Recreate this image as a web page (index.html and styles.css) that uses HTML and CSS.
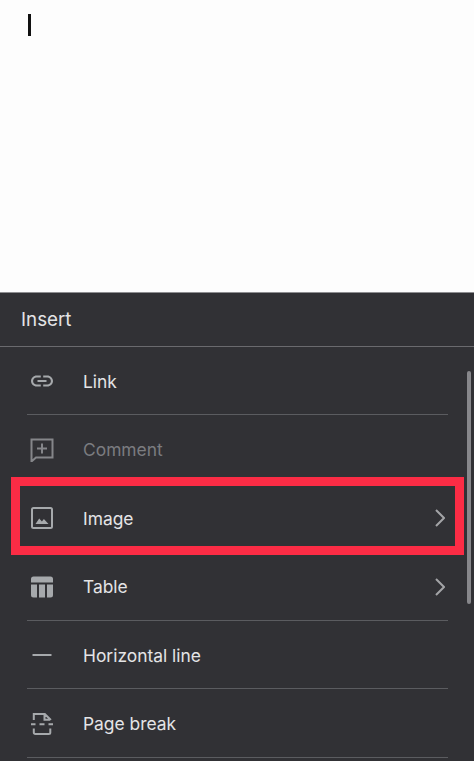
FILE: index.html
```html
<!DOCTYPE html>
<html lang="en">
<head>
  <meta charset="UTF-8">
  <meta name="viewport" content="width=device-width, initial-scale=1.0">
  <title>Insert</title>
  <link rel="stylesheet" href="styles.css">
</head>
<body>
  <div class="editor"><span class="cursor"></span></div>

  <section class="sheet">
    <h2 class="sheet-title">Insert</h2>
    <ul class="menu">
      <li class="row">
        <svg class="icon" viewBox="0 0 24 24"><path d="M3.100 12c0-2 1.600-3.600 3.600-3.600h4.100V6.500H6.700C3.600 6.500 1 9 1 12s2.600 5.500 5.700 5.500h4.100v-1.900H6.700c-2 0-3.600-1.600-3.600-3.600zM7.500 13h9v-2h-9v2zm9.800-6.500h-4.100v1.900h4.100c2 0 3.600 1.600 3.600 3.600s-1.600 3.600-3.600 3.600h-4.100v1.900h4.100c3.100 0 5.700-2.500 5.700-5.500s-2.600-5.500-5.700-5.500z"/></svg>
        <span>Link</span>
      </li>
      <li class="row disabled">
        <svg class="icon" viewBox="0 0 24 24"><path class="line" d="M1.500 1.500h21v18H6L1.500 23.500zM12 5.500v10M7 10.500h10"/></svg>
        <span>Comment</span>
      </li>
      <li class="row">
        <svg class="icon" viewBox="0 0 24 24"><rect class="line" x="2" y="2" width="20" height="20" rx="1.500"/><path d="M5.500 18l3.700-5.500 2.700 3 2-2.500 4.600 5z"/></svg>
        <span>Image</span>
        <svg class="chevron" viewBox="0 0 10 18"><path d="M1 1l8 8-8 8"/></svg>
      </li>
      <li class="row">
        <svg class="icon" viewBox="0 0 24 24"><path d="M3.500 1.500h17a2.500 2.500 0 0 1 2.500 2.500v3.500H1V4a2.500 2.500 0 0 1 2.500-2.500zM1 9.500h6V22.500H3.500A2.500 2.500 0 0 1 1 20zM9 9.500h6v13H9zM17 9.500h6V20a2.500 2.500 0 0 1-2.500 2.500H17z"/></svg>
        <span>Table</span>
        <svg class="chevron" viewBox="0 0 10 18"><path d="M1 1l8 8-8 8"/></svg>
      </li>
      <li class="row">
        <svg class="icon" viewBox="0 0 24 24"><path d="M2.500 11h19v2h-19z"/></svg>
        <span>Horizontal line</span>
      </li>
      <li class="row">
        <svg class="icon" viewBox="0 0 24 24"><path class="line" d="M3.800 8V2h11l5.500 5.500V8M14.500 2v5.800h5.800M3.800 16.500v4a1.500 1.500 0 0 0 1.500 1.500h13.500a1.500 1.500 0 0 0 1.500-1.500v-4M1 12.200h4.500M9.500 12.200h5M18.500 12.200H23"/></svg>
        <span>Page break</span>
      </li>
    </ul>
    <div class="scrollbar"></div>
    <div class="highlight"></div>
  </section>
</body>
</html>
```

FILE: styles.css
```css
* { margin:0; padding:0; box-sizing:border-box; }
html, body { height:100%; }
body { display:flex; flex-direction:column; height:761px; overflow:hidden; background:#fdfdfd; font-family:Inter, "Liberation Sans", sans-serif; color:#e4e4e6; }

/* Editor area */
.editor { height:291.500px; padding:14px 0 0 28px; }
.cursor { display:block; width:3px; height:22px; background:#111; }

/* Bottom sheet */
.sheet { position:relative; flex:1; overflow:hidden; background:#313135; border-top:1px solid #8e8e91; }
.sheet-title { height:54.500px; padding:0 21px; display:flex; align-items:center; font-size:18.800px; font-weight:400; border-bottom:1px solid #6a6a6e; }
.menu { list-style:none; }
.row {
  display:flex; align-items:center; gap:29.500px; height:68.450px;
  margin:0 26px 0 27px; padding:1.500px 3px 0 2.500px;
  font-size:17.400px; border-bottom:1px solid #5b5c60;
}
.row.disabled { color:#7b7c80; }
.icon { width:24px; height:24px; flex:none; fill:#a6a9ac; }
.icon .line { fill:none; stroke:#a6a9ac; stroke-width:2; }
.row.disabled .icon { fill:#85868a; }
.row.disabled .icon .line { stroke:#85868a; }
.chevron { width:10px; height:18px; margin-left:auto; fill:none; stroke:#a3a4a7; stroke-width:2; }

/* Overlays */
.scrollbar { position:absolute; top:78px; left:467px; width:4px; height:233px; border-radius:2px; background:#87878b; }
.highlight { position:absolute; top:184.500px; left:11px; width:453px; height:77.500px; border:9.500px solid #fb2c45; }
```
